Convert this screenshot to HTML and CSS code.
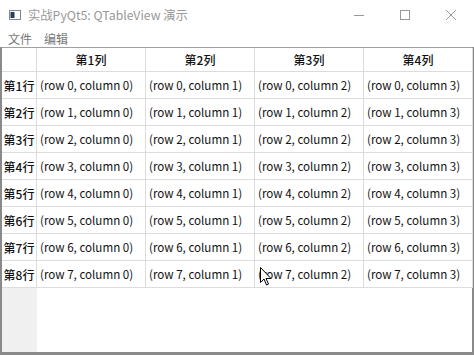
FILE: index.html
```html
<!DOCTYPE html>
<html lang="zh-CN">
<head>
    <meta charset="UTF-8">
    <title>实战PyQt5: QTableView 演示</title>
    <link rel="stylesheet" href="styles.css">
</head>
<body>

<div class="window">
    <div class="titlebar">
        <svg class="app-icon" width="12" height="10" viewBox="0 0 12 10">
            <rect x="0.5" y="0.5" width="11" height="9" fill="#fff" stroke="#7a8699"/>
            <rect x="1.5" y="2" width="4" height="6" fill="#2b3a55"/>
        </svg>
        <span class="title">实战PyQt5: QTableView 演示</span>
        <div class="controls">
            <svg width="46" height="30" viewBox="0 0 46 30"><path d="M18 15.5h10" stroke="#999" stroke-width="1"/></svg>
            <svg width="46" height="30" viewBox="0 0 46 30"><rect x="18.5" y="10.5" width="9" height="9" fill="none" stroke="#999"/></svg>
            <svg width="46" height="30" viewBox="0 0 46 30"><path d="M18 10l10 10M28 10l-10 10" stroke="#999" stroke-width="1"/></svg>
        </div>
    </div>

    <div class="menubar">
        <span>文件</span>
        <span>编辑</span>
    </div>

    <div class="frame">
        <div class="grid" id="grid">
            <div class="corner"></div>
            <div class="hhead">第1列</div>
            <div class="hhead">第2列</div>
            <div class="hhead">第3列</div>
            <div class="hhead">第4列</div>
        </div>
        <div class="filler">
            <div class="vfill"></div>
        </div>
        <svg class="cursor" width="12" height="19" viewBox="0 0 12 19">
            <path d="M0.5 0.5v15l3.5-3.5 2.5 6 2-1-2.5-5.5h5z" fill="#fff" stroke="#000" stroke-width="1" stroke-linejoin="round"/>
        </svg>
    </div>
</div>

<script>
    const grid = document.getElementById('grid');
    for (let r = 0; r < 8; r++) {
        const head = document.createElement('div');
        head.className = 'vhead';
        head.textContent = `第${r + 1}行`;
        grid.appendChild(head);
        for (let c = 0; c < 4; c++) {
            const cell = document.createElement('div');
            cell.className = 'cell';
            cell.textContent = `(row ${r}, column ${c})`;
            grid.appendChild(cell);
        }
    }
</script>
</body>
</html>
```

FILE: styles.css
```css
body {
    margin: 0;
    font-family: "Noto Sans CJK SC", "Noto Sans", sans-serif;
    font-size: 12px;
    background: #fff;
}
.window {
    width: 474px;
    height: 355px;
    display: flex;
    flex-direction: column;
    overflow: hidden;
}
.titlebar {
    height: 30px;
    display: flex;
    align-items: center;
    padding-left: 9px;
    color: #999;
}
.app-icon {
    margin-right: 7px;
}
.title {
    flex: 1;
    font-size: 12.3px;
}
.controls {
    display: flex;
}
.menubar {
    height: 17px;
    display: flex;
    align-items: center;
    padding-left: 8px;
    gap: 12px;
    color: #777;
}
.frame {
    position: relative;
    flex: 1;
    display: flex;
    flex-direction: column;
    border-top: 1px solid #a0a0a0;
    border-left: 2px solid #8a8a8a;
    border-right: 2px solid #8a8a8a;
    border-bottom: 3px solid #8a8a8a;
}
.grid {
    display: grid;
    grid-template-columns: 35px repeat(4, 109px);
    grid-template-rows: 24px repeat(8, 27px);
}
.grid > div {
    box-sizing: border-box;
    border-right: 1px solid #dcdcdc;
    border-bottom: 1px solid #dcdcdc;
    display: flex;
    align-items: center;
    white-space: nowrap;
    overflow: hidden;
}
.hhead {
    justify-content: center;
    font-weight: 500;
    color: #111;
}
.vhead {
    justify-content: center;
    font-weight: 500;
    color: #111;
}
.cell {
    padding-left: 3px;
    font-size: 11.6px;
    color: #111;
}
.filler {
    flex: 1;
    display: flex;
}
.vfill {
    width: 35px;
    background: #f0f0f0;
}
.cursor {
    position: absolute;
    left: 258px;
    top: 219px;
}
```
